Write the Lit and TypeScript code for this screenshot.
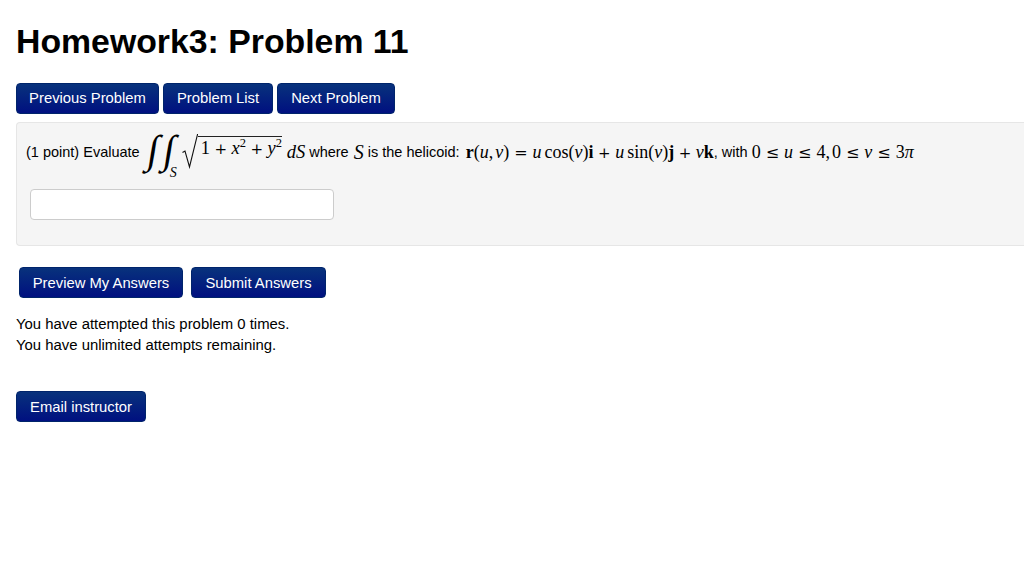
import { LitElement, html, css } from "lit";
import { customElement } from "lit/decorators.js";

@customElement("app-root")
export class AppRoot extends LitElement {
  static styles = css`
    :host { display: block; width: 1024px; height: 584px; overflow: hidden; background: #fff; color: #000;
      font-family: "Liberation Sans", Arial, sans-serif; font-size: 14px; line-height: 20px; }
    .page { padding: 0 0 0 16px; display: flex; flex-direction: column; align-items: flex-start; }
    h1 { margin: 0; padding-top: 22px; font-size: 33.8px; line-height: 38px; font-weight: 700; height: 60px; box-sizing: border-box; }
    .row { display: flex; gap: 4px; }
    .nav { margin-top: 23px; }
    .btn { box-sizing: border-box; height: 31px; padding: 0; display: flex; align-items: center; justify-content: center; color: #fff; font-size: 14.8px; white-space: nowrap;
      border: 1px solid #00246b; border-radius: 4px; background: linear-gradient(#08327c, #001080); }
    .nav .btn { padding-bottom: 1px; }
    .w143 { width: 143px; } .w110 { width: 110px; } .w118 { width: 118px; }
    .w164 { width: 164px; } .w135 { width: 135px; } .w130 { width: 130px; }
    .well { box-sizing: border-box; margin-top: 8px; width: 1020px; height: 124px; background: #f5f5f5; border: 1px solid #e6e6e6; border-right: 0; border-radius: 4px 0 0 4px; padding: 0 0 0 9px; }
    .line { height: 58px; display: flex; align-items: center; white-space: pre; font-size: 14.5px; }
    .m { font-family: "Liberation Serif", "Times New Roman", serif; font-size: 18px; display: inline-flex; align-items: baseline; }
    .m i { font-style: italic; }
    .m b { font-weight: 700; }
    .rel { margin: 0 5px; font-family: "DejaVu Serif", serif; font-size: 16px; }
    .bin { margin: 0 4.5px; font-family: "DejaVu Serif", serif; font-size: 15px; }
    .gapfn { margin-left: 3px; }
    .gapc { margin-left: 2px; }
    .letter { font-size: 20px; margin: 0 0 0 1px; }
    .vec { margin-left: 2px; }
    .int { font-family: "Liberation Serif", serif; font-size: 40px; font-weight: 400; line-height: 40px; display: inline-block; width: 16.5px; text-align: center; transform: skewX(-9deg); margin-top: -4px; }
    .expr { display: flex; align-items: center; margin-left: 5px; height: 50px; }
    .sub { font-family: "Liberation Serif", serif; font-style: italic; font-size: 14px; align-self: flex-end; margin: 0 0 -3px -8px; line-height: 14px; width: 12px; }
    .radical { display: block; flex: none; margin-top: -2px; }
    .under { border-top: 1px solid #222; line-height: 22px; width: 84px; padding-left: 3px; box-sizing: border-box; margin-top: -9px; height: 24px; font-size: 18.5px; }
    sup { font-size: 12.5px; line-height: 0; position: relative; top: -7px; }
    .ds { margin-left: 5px; font-size: 18.5px; }
    input { box-sizing: border-box; display: block; margin-left: 4px; width: 304px; height: 31px; background: #fff; border: 1px solid #ccc; border-radius: 4px; padding: 0; margin-top: 8px; }
    .answers { margin: 21px 0 0 3px; gap: 8px; }
    p { margin: 0; font-size: 14.9px; line-height: 21px; white-space: nowrap; }
    .status { margin-top: 16px; }
    .email { margin-top: 35px; }
  `;

  render() {
    return html`<div class="page">
      <h1>Homework3: Problem 11</h1>
      <div class="row nav">
        <div class="btn w143">Previous Problem</div>
        <div class="btn w110">Problem List</div>
        <div class="btn w118">Next Problem</div>
      </div>
      <div class="well">
        <div class="line">
          <span>(1 point) Evaluate</span>
          <span class="expr">
            <span class="int">∫</span><span class="int">∫</span><span class="sub">S</span>
            <svg class="radical" width="16" height="35" viewBox="0 0 16 35"><path d="M0.5 18.5 L3 17 L7.5 33 L15.5 0.5 L16 0.5" fill="none" stroke="#111" stroke-width="1.1"/></svg>
            <span class="m under">1<span class="bin">+</span><i>x</i><sup>2</sup><span class="bin">+</span><i>y</i><sup>2</sup></span>
            <span class="m ds"><i>dS</i></span>
          </span>
          <span> where </span><span class="m letter"><i>S</i></span><span> is the helicoid: </span>
          <span class="m vec"><b>r</b>(<i>u</i>,<i class="gapc">v</i>)<span class="rel">=</span><i>u</i><span class="gapfn">cos(</span><i>v</i>)<b>i</b><span class="bin">+</span><i>u</i><span class="gapfn">sin(</span><i>v</i>)<b>j</b><span class="bin">+</span><i>v</i><b>k</b></span>
          <span>, with </span>
          <span class="m">0<span class="rel">≤</span><i>u</i><span class="rel">≤</span>4,<span class="gapc">0</span><span class="rel">≤</span><i>v</i><span class="rel">≤</span>3<i>π</i></span>
        </div>
        <input type="text" />
      </div>
      <div class="row answers">
        <div class="btn w164">Preview My Answers</div>
        <div class="btn w135">Submit Answers</div>
      </div>
      <div class="status">
        <p>You have attempted this problem 0 times.</p>
        <p>You have unlimited attempts remaining.</p>
      </div>
      <div class="btn email w130">Email instructor</div>
    </div>`;
  }
}
